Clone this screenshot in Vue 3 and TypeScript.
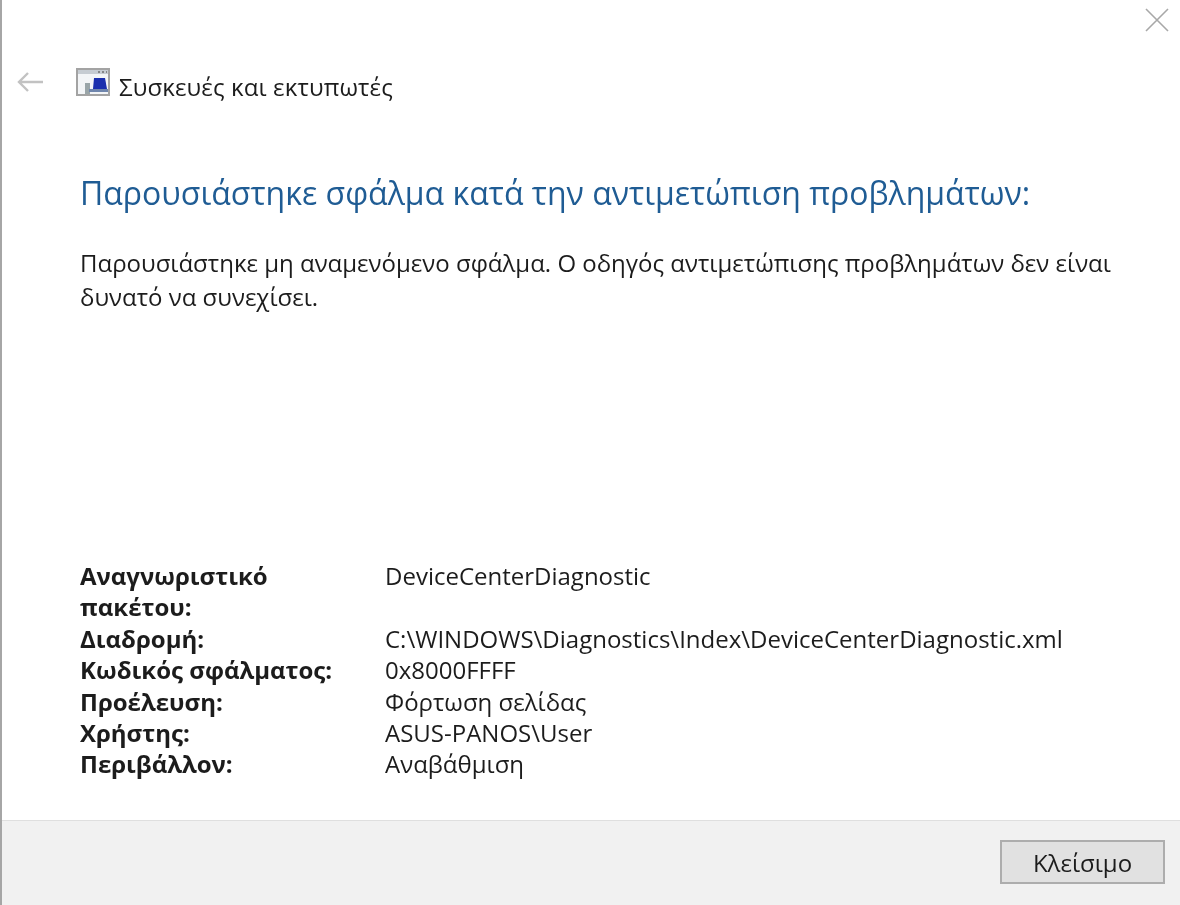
<template>
  <div class="dialog">
    <div class="top">
      <button class="close" aria-label="Κλείσιμο">
        <svg width="24" height="24" viewBox="0 0 24 24"><path d="M1 1 23 23M23 1 1 23" fill="none" stroke="#a8a8a8" stroke-width="1.6" /></svg>
      </button>
    </div>
    <div class="nav">
      <svg class="back" width="26" height="20" viewBox="0 0 26 20"><path d="M11 1 2 10l9 9M2 10h24" fill="none" stroke="#c2c2c2" stroke-width="2.4" /></svg>
      <svg class="app-icon" width="34" height="28" viewBox="0 0 34 28">
        <rect x="1" y="1" width="32" height="26" fill="#f3f5f7" stroke="#a3a3a3" stroke-width="2" />
        <rect x="2" y="2" width="30" height="4" fill="#c6ccd2" />
        <path d="M22 4h2M26 4h2M30 4h1" stroke="#707070" stroke-width="1.5" />
        <rect x="9" y="15" width="5" height="11" fill="#9aa5a8" />
        <path d="M17 21 18 10h11l2 11z" fill="#1a2fae" />
        <rect x="13" y="21" width="19" height="3" fill="#6f86ad" />
      </svg>
      <span class="nav-title">Συσκευές και εκτυπωτές</span>
    </div>
    <main class="content">
      <h1>Παρουσιάστηκε σφάλμα κατά την αντιμετώπιση προβλημάτων:</h1>
      <p class="message">Παρουσιάστηκε μη αναμενόμενο σφάλμα. Ο οδηγός αντιμετώπισης προβλημάτων δεν είναι δυνατό να συνεχίσει.</p>
      <dl class="details">
        <template v-for="row in rows" :key="row.label">
          <dt>{{ row.label }}</dt>
          <dd>{{ row.value }}</dd>
        </template>
      </dl>
    </main>
    <footer class="footer">
      <button class="close-btn">Κλείσιμο</button>
    </footer>
  </div>
</template>

<script setup lang="ts">
const rows: { label: string; value: string }[] = [
  { label: 'Αναγνωριστικό πακέτου:', value: 'DeviceCenterDiagnostic' },
  { label: 'Διαδρομή:', value: 'C:\\WINDOWS\\Diagnostics\\Index\\DeviceCenterDiagnostic.xml' },
  { label: 'Κωδικός σφάλματος:', value: '0x8000FFFF' },
  { label: 'Προέλευση:', value: 'Φόρτωση σελίδας' },
  { label: 'Χρήστης:', value: 'ASUS-PANOS\\User' },
  { label: 'Περιβάλλον:', value: 'Αναβάθμιση' }
];
</script>

<style>
html,
body {
  margin: 0;
  background: #fff;
}
</style>

<style scoped>
.dialog {
  box-sizing: border-box;
  width: 1180px;
  height: 905px;
  display: flex;
  flex-direction: column;
  border-left: 2px solid #a6a6a6;
  font-family: "Open Sans", "Noto Sans", sans-serif;
  color: #1c1c1c;
  overflow: hidden;
  filter: blur(0.5px);
}

.top {
  height: 66px;
  display: flex;
  justify-content: flex-end;
}

.close {
  margin: 8px 11px 0 0;
  width: 24px;
  height: 24px;
  padding: 0;
  border: 0;
  background: none;
}

.nav {
  height: 40px;
  display: flex;
  align-items: center;
  padding-left: 15px;
}

.back {
  margin-top: -8px;
}

.app-icon {
  margin-left: 33px;
  margin-top: -9px;
}

.nav-title {
  margin-left: 9px;
  font-size: 24px;
  letter-spacing: 0.12px;
}

.content {
  flex: 1;
  padding: 0 60px 0 78px;
  display: flex;
  flex-direction: column;
}

h1 {
  margin: 65px 0 0;
  font-size: 32px;
  font-weight: 400;
  line-height: 44px;
  white-space: nowrap;
  color: #1f5c94;
}

.message {
  margin: 31px 0 0;
  font-size: 24px;
  line-height: 34px;
}

.details {
  margin: 246px 0 0;
  display: grid;
  grid-template-columns: 305px 1fr;
  font-size: 24px;
  line-height: 31.4px;
}

dt {
  font-weight: 700;
}

dt:first-of-type {
  width: 220px;
}

dd {
  margin: 0;
}

.footer {
  height: 85px;
  box-sizing: border-box;
  background: #f1f1f1;
  border-top: 1px solid #dfdfdf;
  display: flex;
  justify-content: flex-end;
  align-items: flex-start;
  padding: 19px 15px 0 0;
}

.close-btn {
  width: 165px;
  height: 44px;
  background: #e1e1e1;
  border: 2px solid #adadad;
  font: inherit;
  font-size: 24px;
  color: #1c1c1c;
}
</style>
